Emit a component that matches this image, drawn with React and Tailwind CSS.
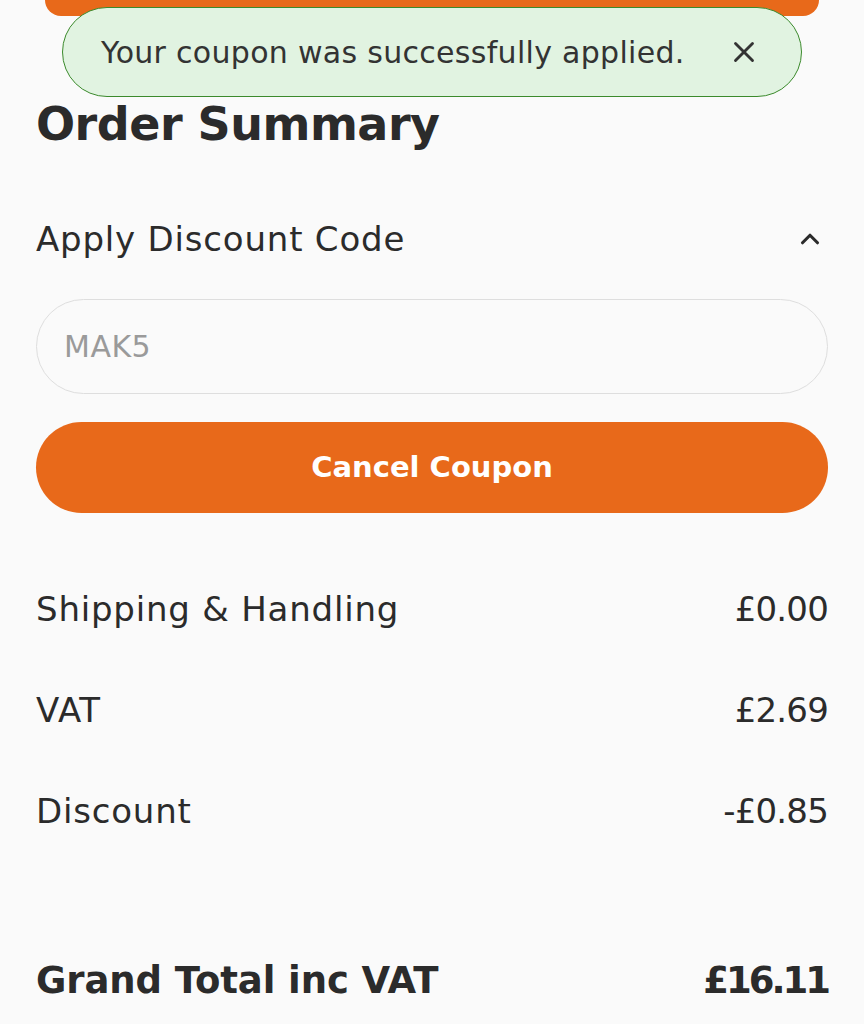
import { X, ChevronUp } from "lucide-react";

export default function App() {
  const rows = [
    { label: "Shipping & Handling", value: "£0.00" },
    { label: "VAT", value: "£2.69" },
    { label: "Discount", value: "-£0.85" },
  ];

  return (
    <div
      className="min-h-screen bg-[#fafafa] text-[#2b2b2b] relative overflow-hidden"
      style={{ fontFamily: '"DejaVu Sans", sans-serif' }}
    >
      <div className="mx-[45px] h-[16px] bg-[#e8691a] rounded-b-[40px]" />

      <div className="absolute left-[62px] top-[7px] w-[740px] h-[90px] rounded-full bg-[#e1f3e1] border-[1.5px] border-[#3b8a2c] flex items-center pl-[38px] pr-[40px]">
        <span className="flex-1 text-[30px] text-[#333] tracking-[0.3px]">
          Your coupon was successfully applied.
        </span>
        <X size={34} strokeWidth={2} className="text-[#333]" />
      </div>

      <div className="px-[36px]">
        <h1 className="mt-[78px] text-[46px] font-bold leading-[60px] tracking-[-0.5px]">
          Order Summary
        </h1>

        <div className="mt-[65px] flex items-center justify-between h-[40px]">
          <span className="text-[34px] tracking-[0.8px]">Apply Discount Code</span>
          <ChevronUp size={30} strokeWidth={2.5} className="mr-[3px]" />
        </div>

        <div className="mt-[40px] h-[95px] rounded-full border border-[#dedede] flex items-center px-[27px]">
          <span className="text-[30px] text-[#9a9a9a] tracking-[0.5px]">MAK5</span>
        </div>

        <button className="mt-[28px] w-full h-[91px] rounded-full bg-[#e8691a] text-white text-[29px] font-bold">
          Cancel Coupon
        </button>

        <div className="mt-[46px]">
          {rows.map((r) => (
            <div
              key={r.label}
              className="flex items-center justify-between h-[101px] text-[34px]"
            >
              <span className="tracking-[0.8px]">{r.label}</span>
              <span className="tracking-[-0.8px]">{r.value}</span>
            </div>
          ))}
        </div>

        <div className="mt-[89px] flex items-center justify-between h-[60px] text-[37px] font-bold">
          <span className="tracking-[-0.1px]">Grand Total inc VAT</span>
          <span className="tracking-[-3px]">£16.11</span>
        </div>
      </div>
    </div>
  );
}
